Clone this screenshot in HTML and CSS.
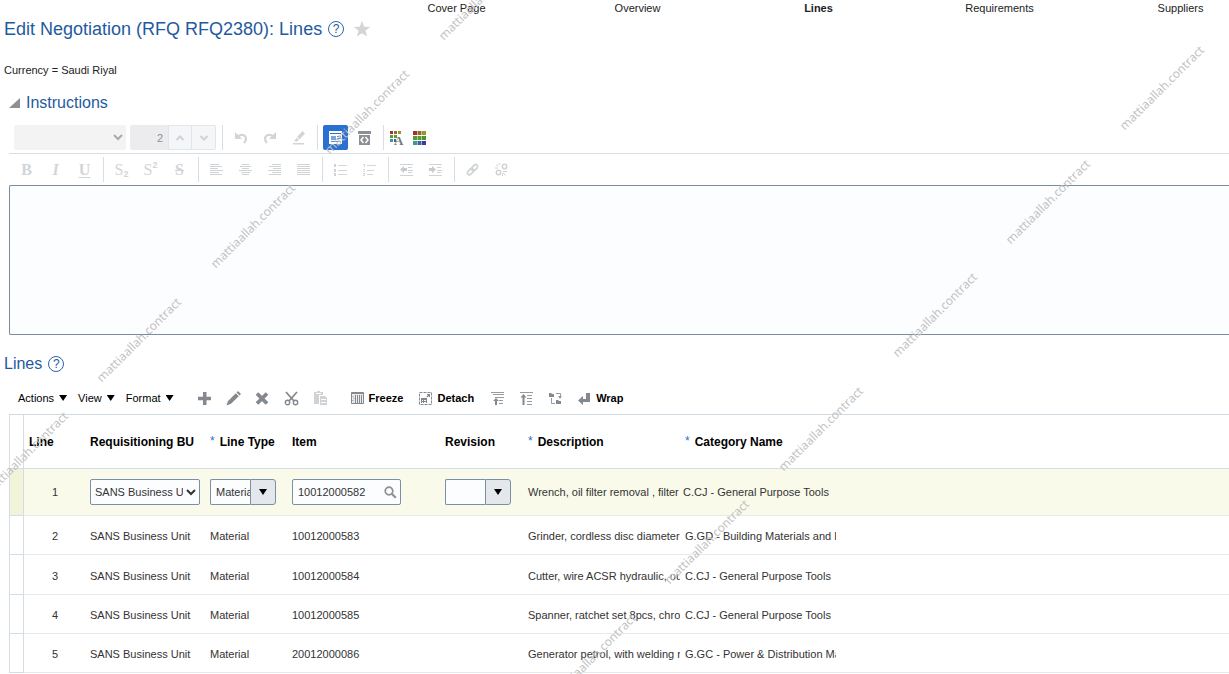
FILE: index.html
```html
<!DOCTYPE html>
<html lang="en">
<head>
<meta charset="utf-8">
<title>Edit Negotiation: Lines</title>
<link rel="stylesheet" href="styles.css">
</head>
<body>
<div class="page">
<nav class="train" aria-label="Steps">
  <a href="#cover">Cover Page</a>
  <a href="#overview">Overview</a>
  <a href="#lines" class="current">Lines</a>
  <a href="#requirements">Requirements</a>
  <a href="#suppliers">Suppliers</a>
</nav>

<header class="title">
  <h1>Edit Negotiation (RFQ RFQ2380): Lines</h1>
  <button class="help" aria-label="Help">?</button>
  <button class="star" aria-label="Favorite"><svg width="18" height="18" viewBox="0 0 18 18"><path fill="#d3d4d6" d="M9 1l2.200 5.700 6 .2-4.800 3.700 1.800 6L9 13.200l-5.200 3.400 1.800-6L.8 6.900l6-.2z"/></svg></button>
</header>
<p class="currency">Currency = Saudi Riyal</p>

<section class="instructions">
  <h2><svg width="11" height="11" viewBox="0 0 11 11"><path fill="#8d9095" d="M11 0v10H0z"/></svg>Instructions</h2>
  <div class="editor">
    <div class="tools tools-top">
      <select class="font-name" aria-label="Font" disabled><option></option></select>
      <div class="spinner">
        <input type="text" value="2" aria-label="Font size" disabled>
        <button aria-label="Increase"><svg width="10" height="6" viewBox="0 0 10 6"><path d="M1.500 5L5 1.500 8.500 5" fill="none" stroke="#cfd3d6" stroke-width="2"/></svg></button>
        <button aria-label="Decrease"><svg width="10" height="6" viewBox="0 0 10 6"><path d="M1.500 1L5 4.500 8.500 1" fill="none" stroke="#cfd3d6" stroke-width="2"/></svg></button>
      </div>
      <i class="sep"></i>
      <button aria-label="Undo"><svg width="14" height="12" viewBox="0 0 14 12"><path d="M3 5c4-4 9-2 9 2 0 2-1 3-2 4" fill="none" stroke="#d2d5d7" stroke-width="2.200"/><path fill="#d2d5d7" d="M1 0v7h7z"/></svg></button>
      <button aria-label="Redo"><svg width="14" height="12" viewBox="0 0 14 12"><path d="M11 5C7 1 2 3 2 7c0 2 1 3 2 4" fill="none" stroke="#d2d5d7" stroke-width="2.200"/><path fill="#d2d5d7" d="M13 0v7H6z"/></svg></button>
      <button aria-label="Clear formatting"><svg width="13" height="14" viewBox="0 0 13 14"><path fill="#d2d5d7" d="M10.500 0L13 2.500 7.500 8.500 5 6zM4.500 6.800L6.800 9 5 10.500H2zM1 12h11v1.500H1z"/></svg></button>
      <i class="sep"></i>
      <button class="pressed" aria-label="Rich text mode"><svg width="13" height="13" viewBox="0 0 13 13"><path fill="#fff" d="M0 0h13v13H0z"/><path fill="#2a6fd2" d="M1 2h11v1H1z"/><path fill="#78a6e6" d="M2 5h5v4H2z"/><path fill="#5990dc" d="M8 5h4v1H8zM8 7h4v1H8zM2 10h10v1H2z"/></svg></button>
      <button aria-label="Source code mode"><svg width="13" height="14" viewBox="0 0 13 14"><path fill="#8d8f92" d="M0 0h13v3H0zM1 4h11v10H1z"/><path d="M5.500 6L3 9l2.500 3M7.500 6L10 9l-2.500 3" fill="none" stroke="#fff" stroke-width="1.500"/></svg></button>
      <i class="sep"></i>
      <div class="colors">
        <button aria-label="Text color"><svg width="15" height="14" viewBox="0 0 15 14"><path fill="#963636" d="M1 0h3v3H1z"/><path fill="#99662f" d="M5 0h3v3H5z"/><path fill="#999533" d="M9 0h3v3H9z"/><path fill="#639632" d="M1 4h3v3H1z"/><path fill="#52a029" d="M5 4h3v3H5z"/><path fill="#429696" d="M1 8h3v3H1z"/><path fill="#3667a0" d="M5 8h2v3H5z"/><text x="5" y="14" class="glyph-a">A</text></svg></button>
        <button aria-label="Background color"><svg width="13" height="14" viewBox="0 0 13 14"><path fill="#963636" d="M0 0h4v4H0z"/><path fill="#99662f" d="M4.500 0h4v4h-4z"/><path fill="#999533" d="M9 0h4v4H9z"/><path fill="#639632" d="M0 5h4v4H0z"/><path fill="#52a029" d="M4.500 5h4v4h-4z"/><path fill="#469632" d="M9 5h4v4H9z"/><path fill="#429696" d="M0 10h4v4H0z"/><path fill="#3667a0" d="M4.500 10h4v4h-4z"/><path fill="#403a99" d="M9 10h4v4H9z"/></svg></button>
      </div>
    </div>
    <div class="tools tools-bottom">
      <button class="glyph" aria-label="Bold">B</button>
      <button class="glyph italic" aria-label="Italic">I</button>
      <button class="glyph underline" aria-label="Underline">U</button>
      <i class="sep"></i>
      <button class="glyph" aria-label="Subscript">S<small class="low">2</small></button>
      <button class="glyph" aria-label="Superscript">S<small class="high">2</small></button>
      <button class="glyph strike" aria-label="Strikethrough">S</button>
      <i class="sep"></i>
      <button aria-label="Align left"><svg width="13" height="12" viewBox="0 0 13 12"><path stroke="#d0d3d5" d="M0 .5h9M0 2.500h12M0 4.500h8M0 6.500h13M0 8.500h9M0 10.500h12"/></svg></button>
      <button aria-label="Align center"><svg width="13" height="12" viewBox="0 0 13 12"><path stroke="#d0d3d5" d="M3 .5h7M1 2.500h11M3 4.500h7M0 6.500h13M2 8.500h9M3 10.500h7"/></svg></button>
      <button aria-label="Align right"><svg width="13" height="12" viewBox="0 0 13 12"><path stroke="#d0d3d5" d="M4 .5h9M1 2.500h12M5 4.500h8M0 6.500h13M4 8.500h9M1 10.500h12"/></svg></button>
      <button aria-label="Justify"><svg width="13" height="12" viewBox="0 0 13 12"><path stroke="#d0d3d5" d="M0 .5h13M0 2.500h13M0 4.500h13M0 6.500h13M0 8.500h13M0 10.500h13"/></svg></button>
      <i class="sep"></i>
      <button aria-label="Bulleted list"><svg width="13" height="12" viewBox="0 0 13 12"><path stroke="#d5d8da" d="M4 1.500h9M4 6.500h9M4 10.500h9"/><path fill="#d0d3d5" d="M0 0h2v3H0zM0 5h2v3H0zM0 9h2v3H0z"/></svg></button>
      <button aria-label="Numbered list"><svg width="13" height="12" viewBox="0 0 13 12"><path stroke="#d5d8da" d="M4 1.500h9M4 6.500h7M4 10.500h6M1.500 0v3M0 .5h1M0 5.500h2M0 7.500h2M0 9.500h2M0 11.500h2M1.500 9v3"/></svg></button>
      <i class="sep"></i>
      <button aria-label="Outdent"><svg width="13" height="12" viewBox="0 0 13 12"><path stroke="#d0d3d5" d="M0 .5h13M8 3.500h4M8 6.500h5M8 8.500h4M0 11.500h13"/><path fill="#c8cbcd" d="M0 5.500L4 2v2h3v3H4v2z"/></svg></button>
      <button aria-label="Indent"><svg width="13" height="12" viewBox="0 0 13 12"><path stroke="#d0d3d5" d="M0 .5h13M8 3.500h4M8 6.500h5M8 8.500h4M0 11.500h13"/><path fill="#c8cbcd" d="M7 5.500L3 2v2H0v3h3v2z"/></svg></button>
      <i class="sep"></i>
      <button aria-label="Link"><svg width="13" height="13" viewBox="0 0 13 13"><g fill="none" stroke="#d0d3d5" stroke-width="1.800"><rect x="5" y="2.700" width="7" height="4" rx="2" transform="rotate(-45 8.500 4.700)"/><rect x="1" y="6.700" width="7" height="4" rx="2" transform="rotate(-45 4.500 8.700)"/></g></svg></button>
      <button aria-label="Remove link"><svg width="13" height="13" viewBox="0 0 13 13"><g fill="none" stroke="#d0d3d5" stroke-width="1.500"><circle cx="9.500" cy="3.500" r="2.200"/><circle cx="3.500" cy="9.500" r="2.200"/><path stroke-width="1" d="M1 2l2 1M4 0l.5 2M0 5h3M8 8.500h4M8 10l3 2.500M7.500 10.500V13"/></g></svg></button>
    </div>
    <textarea class="body-text" aria-label="Instructions"></textarea>
  </div>
</section>

<section class="lines" id="lines">
  <h2>Lines <button class="help" aria-label="Help">?</button></h2>
  <div class="table-tools">
    <div class="menus">
      <button>Actions<i class="caret"></i></button>
      <button>View<i class="caret"></i></button>
      <button>Format<i class="caret"></i></button>
    </div>
    <div class="icons">
      <button aria-label="Add"><svg width="13" height="13" viewBox="0 0 13 13"><path fill="#85888c" d="M5 0h3.500v4.800H13v3.400H8.500V13H5V8.200H0V4.800h5z"/></svg></button>
      <button aria-label="Edit"><svg width="15" height="15" viewBox="0 0 15 15"><path fill="#85888c" d="M12 0l3 3-1.500 1.500-3-3zM9.800 2.200l3 3-7.800 7.600L.5 14.500 2 10z"/></svg></button>
      <button aria-label="Delete"><svg width="14" height="13" viewBox="0 0 14 13"><path d="M2 1.500l10 10M12 1.500l-10 10" stroke="#85888c" stroke-width="3.800"/></svg></button>
      <button aria-label="Cut"><svg width="15" height="15" viewBox="0 0 15 15"><g fill="none" stroke="#85888c"><circle cx="3.500" cy="11.500" r="2.200" stroke-width="1.400"/><circle cx="11.500" cy="11.500" r="2.200" stroke-width="1.400"/><path stroke-width="1.800" d="M2 1l8 9M13 1L5 10"/></g></svg></button>
      <button aria-label="Paste"><svg width="15" height="14" viewBox="0 0 15 14"><path fill="#d0d2d4" d="M1 1h3V0h3v1h3v3H6v9H1zM7 5h5l2 2v7H7z"/><path fill="#fff" d="M8 8h5v1H8zM8 11h5v1H8zM3 2h5v1H3z"/></svg></button>
    </div>
    <button class="labelled"><svg width="13" height="12" viewBox="0 0 13 12"><path d="M.5.500h12v11H.5z" fill="#ececed" stroke="#85888c"/><path stroke="#85888c" d="M0 1.500h13M4.500 3v8M6.500 3v8M8.500 3v8M10.500 3v8M1.500 4.500h1M2.500 6.500h1M1.500 8.500h1"/></svg>Freeze</button>
    <button class="labelled"><svg width="13" height="13" viewBox="0 0 13 13"><path d="M.5.500h12v12H.5z" fill="none" stroke="#85888c" stroke-dasharray="3 1"/><path fill="#85888c" d="M2 6h6v5H2zM8 2h3v3h-1V4L8.500 5.500l-1-1L9 3H8z"/><path fill="#fff" d="M3 8h1v1H3zM5 8h2v1H5zM3 10h1v1H3zM5 10h2v1H5z"/></svg>Detach</button>
    <div class="icons">
      <button aria-label="Move down"><svg width="13" height="13" viewBox="0 0 13 13"><path stroke="#999c9f" d="M0 .5h13M2 2.500h11M4 5.500h9M8 8.500h4M8 11.500h4"/><path fill="#85888c" d="M5 6l3 3H6v4H4V9H2z"/></svg></button>
      <button aria-label="Move up"><svg width="13" height="13" viewBox="0 0 13 13"><path stroke="#999c9f" d="M0 .5h13M7 3.500h5M7 6.500h5M7 9.500h5M7 12.500h5"/><path fill="#85888c" d="M3.500 2l3 3.500h-2V13h-2V5.500h-2z"/></svg></button>
      <button aria-label="Hierarchy"><svg width="13" height="13" viewBox="0 0 13 13"><path fill="#85888c" d="M0 1h2l1 1h2v3H0zM7 8h2l1 1h2v3H7z"/><path d="M7 1.500h4.500V4M2.500 6v5.500H6" fill="none" stroke="#999c9f"/><path fill="#999c9f" d="M9 4h4l-2 3z"/></svg></button>
    </div>
    <button class="labelled wrap"><svg width="13" height="13" viewBox="0 0 13 13"><path fill="#85888c" d="M8 1h4v9H5v3L0 8.500 5 4v3h3z"/></svg>Wrap</button>
  </div>

  <table>
    <colgroup><col class="c-handle"><col class="c-line"><col class="c-bu"><col class="c-type"><col class="c-item"><col class="c-rev"><col class="c-desc"><col class="c-cat"><col></colgroup>
    <thead>
      <tr><th class="handle"></th><th>Line</th><th>Requisitioning BU</th><th><b class="req">*</b>Line Type</th><th>Item</th><th>Revision</th><th><b class="req">*</b>Description</th><th><b class="req">*</b>Category Name</th><th></th></tr>
    </thead>
    <tbody>
      <tr class="active">
        <td class="handle"></td><td class="num">1</td>
        <td><select class="field bu" aria-label="Requisitioning BU"><option>SANS Business Unit</option></select></td>
        <td><div class="combo"><input class="field" value="Material" aria-label="Line Type"><button aria-label="Open"><i class="caret"></i></button></div></td>
        <td><div class="lookup field"><input value="10012000582" aria-label="Item"><button aria-label="Search"><svg width="13" height="13" viewBox="0 0 13 13"><circle cx="5" cy="5" r="3.800" fill="none" stroke="#8e9194" stroke-width="1.700"/><path d="M7.800 7.800l4 4" stroke="#8e9194" stroke-width="2.200"/></svg></button></div></td>
        <td><div class="combo"><input class="field" aria-label="Revision"><button aria-label="Open"><i class="caret"></i></button></div></td>
        <td>Wrench, oil filter removal , filter</td><td class="category">C.CJ - General Purpose Tools</td><td></td>
      </tr>
      <tr><td class="handle"></td><td class="num">2</td><td>SANS Business Unit</td><td>Material</td><td>10012000583</td><td></td><td>Grinder, cordless disc diameter</td><td>G.GD - Building Materials and E</td><td></td></tr>
      <tr><td class="handle"></td><td class="num">3</td><td>SANS Business Unit</td><td>Material</td><td>10012000584</td><td></td><td>Cutter, wire ACSR hydraulic, ou</td><td>C.CJ - General Purpose Tools</td><td></td></tr>
      <tr><td class="handle"></td><td class="num">4</td><td>SANS Business Unit</td><td>Material</td><td>10012000585</td><td></td><td>Spanner, ratchet set 8pcs, chror</td><td>C.CJ - General Purpose Tools</td><td></td></tr>
      <tr><td class="handle"></td><td class="num">5</td><td>SANS Business Unit</td><td>Material</td><td>20012000086</td><td></td><td>Generator petrol, with welding n</td><td>G.GC - Power &amp; Distribution Ma</td><td></td></tr>
    </tbody>
  </table>
</section>

<div class="watermarks" aria-hidden="true">
  <span class="w1">mattiaallah.contract</span>
  <span class="w2">mattiaallah.contract</span>
  <span class="w3">mattiaallah.contract</span>
  <span class="w4">mattiaallah.contract</span>
  <span class="w5">mattiaallah.contract</span>
  <span class="w6">mattiaallah.contract</span>
  <span class="w7">mattiaallah.contract</span>
  <span class="w8">mattiaallah.contract</span>
  <span class="w9">mattiaallah.contract</span>
  <span class="w10">mattiaallah.contract</span>
  <span class="w11">mattiaallah.contract</span>
</div>
</div>
</body>
</html>
```
FILE: styles.css
```css
* { box-sizing: border-box; }
body {
  margin: 0;
  background: #fff;
  color: #333;
  font: 11px/16px "Liberation Sans", Arial, sans-serif;
}
.page { position: relative; min-height: 100vh; overflow: hidden; }
button, input, select, textarea { font: inherit; color: inherit; margin: 0; padding: 0; }
button { background: none; border: 0; display: flex; align-items: center; justify-content: center; }
svg { display: block; flex: none; }
h1, h2, p { margin: 0; font-weight: normal; }
h1, h2 { color: #1f5aa0; }

/* Step train */
.train { display: grid; grid-auto-flow: column; grid-auto-columns: 181px; margin-left: 366px; text-align: center; }
.train a { color: #222; text-decoration: none; }
.train .current { font-weight: bold; }

/* Heading */
.title { display: flex; align-items: center; height: 26px; padding-left: 4px; }
h1 { font-size: 18px; line-height: 26px; }
.help { width: 16px; height: 16px; border: 1px solid #2a64ab; border-radius: 50%; color: #1f5aa0; font-size: 12px; line-height: 14px; margin-left: 6px; }
.star { margin-left: 9px; }
.currency { margin: 20px 0 15px; padding-left: 4px; color: #222; }
h2 { display: flex; align-items: center; font-size: 16px; line-height: 20px; }

/* Rich text editor */
.instructions h2 { gap: 6px; padding-left: 9px; margin-bottom: 12px; }
.editor { margin-left: 9px; }
.tools { display: flex; align-items: center; gap: 4px; padding: 0 5px 3px; }
.tools button { width: 25px; height: 25px; border-radius: 2px; }
.tools-top { border-bottom: 1px solid #d6dfe6; }
.tools-bottom { padding-top: 3px; }
.sep { width: 1px; height: 25px; margin: 0 1px 0 2px; background: #d6dfe6; }
.font-name { width: 112px; height: 25px; border: 0; border-radius: 2px; background: #f3f3f3; color: #aaa; }
.font-name:disabled { opacity: 1; }
.spinner { display: flex; width: 86px; height: 25px; }
.spinner input { flex: 1; min-width: 0; border: 0; border-radius: 2px 0 0 2px; background: #ececee; color: #909090; text-align: right; padding-right: 5px; }
.spinner button { width: 24px; border: 1px solid #dfe6ec; background: #f4f6f8; border-radius: 0; }
.spinner button + button { border-left: 0; border-radius: 0 2px 2px 0; }
.tools .pressed { background: #2a6fd2; }
.colors { display: flex; gap: 8px; }
.colors button { width: 15px; }
.glyph-a { font: bold 13px "Liberation Serif", serif; fill: #77797c; }
.tools .glyph { font: bold 16px/20px "Liberation Serif", serif; color: #d2d5d7; }
.tools .italic { font-style: italic; }
.tools .underline { text-decoration: underline; text-underline-offset: 2px; }
.tools .strike { text-decoration: line-through; }
.tools .glyph:has(small) { font-weight: normal; }
.glyph small { font: bold 9px/10px "Liberation Sans", sans-serif; }
.low { align-self: flex-end; padding-bottom: 3px; }
.high { align-self: flex-start; padding-top: 3px; }
.body-text { display: block; width: 100%; height: 150px; border: 1px solid #7b8c9c; border-right: 0; border-radius: 2px 0 0 2px; background: #fcfdff; resize: none; outline: 0; }

/* Lines toolbar */
.lines { margin-top: 19px; }
.lines h2 { padding-left: 4px; margin-bottom: 12px; }
.table-tools { display: flex; align-items: center; height: 24px; padding-left: 18px; margin-bottom: 4px; color: #000; }
.menus { display: flex; gap: 11px; margin-right: 16px; }
.menus button { gap: 5px; }
.caret { width: 8px; height: 6px; background: #000; clip-path: polygon(0 0, 100% 0, 50% 100%); }
.icons { display: flex; }
.icons button { width: 29px; height: 24px; }
.labelled { gap: 5px; font-weight: bold; margin-left: 16px; }
.labelled + .icons { margin-left: 9px; }
.wrap { margin-left: 8px; }

/* Lines table */
table { width: calc(100% - 9px); margin-left: 9px; table-layout: fixed; border-collapse: separate; border-spacing: 0; border-top: 1px solid #cfdae2; }
.c-handle { width: 15px; }
.c-line { width: 60px; }
.c-bu { width: 121px; }
.c-type { width: 82px; }
.c-item { width: 153px; }
.c-rev { width: 83px; }
.c-desc { width: 157px; }
.c-cat { width: 156px; }
th, td { height: 39px; padding: 2px 0 0 5px; text-align: left; vertical-align: middle; white-space: nowrap; overflow: hidden; border-bottom: 1px solid #e8eaec; }
td:nth-child(3), th:nth-child(3) { padding-left: 6px; }
tr:nth-child(3) td { height: 40px; }
th { height: 54px; padding-top: 0; font-size: 12px; color: #000; border-color: #d3dde5; }
.handle { border-left: 1px solid #d3dde5; border-right: 1px solid #d3dde5; border-bottom-color: #d3dde5; }
.req { color: #2a6fd2; font-weight: normal; line-height: 8px; margin-right: 5px; vertical-align: 1px; }
.num { text-align: center; padding-left: 2px; }
.active td { height: 47px; padding-top: 0; background: #f9faea; }
.active .handle { background: #f2f4da; }
.active .category { padding-left: 3px; }
.field { height: 26px; border: 1px solid #7b8fa5; border-radius: 2px; background: #fcfdff; }
.bu { display: block; width: 110px; }
.combo { display: flex; }
.combo .field { width: 40px; padding-left: 5px; border-right: 0; border-radius: 2px 0 0 2px; }
.combo button { width: 26px; height: 26px; border: 1px solid #7b8fa5; border-radius: 0 3px 3px 0; background: #e4e8ec; }
.lookup { display: flex; width: 109px; padding: 0 3px 0 5px; }
.lookup input { flex: 1; min-width: 0; border: 0; background: none; }

/* Diagonal watermark */
.watermarks { position: absolute; inset: 0; overflow: hidden; pointer-events: none; }
.watermarks span { position: absolute; font: 12px/16px "Noto Sans", sans-serif; color: #c2c2c2; white-space: nowrap; transform: translate(-50%, -50%) rotate(-45deg); }
.w1 { left: 481px; top: -2px; }
.w2 { left: 367px; top: 112px; }
.w3 { left: 253px; top: 226px; }
.w4 { left: 139px; top: 340px; }
.w5 { left: 26px; top: 454px; }
.w6 { left: 1162px; top: 88px; }
.w7 { left: 1048px; top: 202px; }
.w8 { left: 935px; top: 315px; }
.w9 { left: 821px; top: 429px; }
.w10 { left: 707px; top: 542px; }
.w11 { left: 594px; top: 656px; }
```
